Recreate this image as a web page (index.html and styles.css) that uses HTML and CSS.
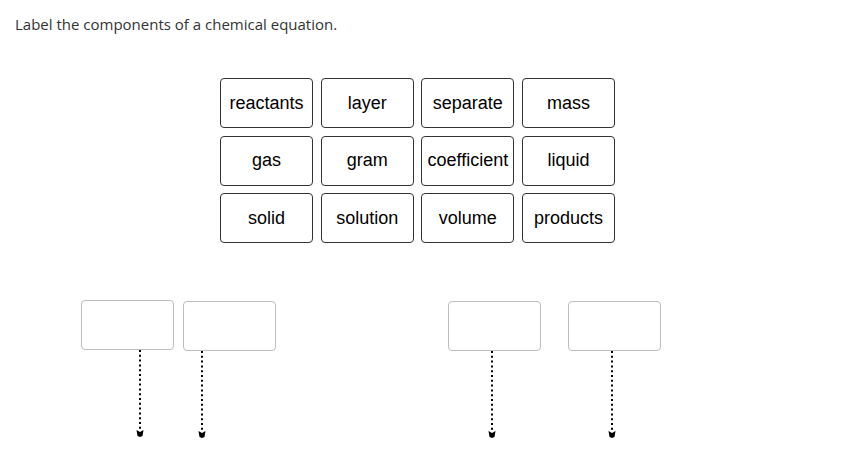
FILE: index.html
```html
<!DOCTYPE html>
<html lang="en">
<head>
<meta charset="utf-8">
<title>Label the components of a chemical equation</title>
<link rel="stylesheet" href="styles.css">
</head>
<body>
<main class="question">
  <p class="prompt">Label the components of a chemical equation.</p>

  <div class="bank">
    <div class="tile">reactants</div>
    <div class="tile">layer</div>
    <div class="tile">separate</div>
    <div class="tile">mass</div>
    <div class="tile">gas</div>
    <div class="tile">gram</div>
    <div class="tile">coefficient</div>
    <div class="tile">liquid</div>
    <div class="tile">solid</div>
    <div class="tile">solution</div>
    <div class="tile">volume</div>
    <div class="tile">products</div>
  </div>

  <div class="diagram">
    <div class="target t1"></div>
    <div class="target t2"></div>
    <div class="target t3"></div>
    <div class="target t4"></div>

    <svg class="leader a1" width="10" height="90" viewBox="0 0 10 90"><line x1="5" y1="0" x2="5" y2="79" stroke="#000" stroke-width="2" stroke-dasharray="2 2.8"/><path d="M1.5 80 L5 82 L8.5 80 L7.5 86 L5 87 L2.5 86 Z" fill="#000"/></svg>
    <svg class="leader a2" width="10" height="90" viewBox="0 0 10 90"><line x1="5" y1="0" x2="5" y2="79" stroke="#000" stroke-width="2" stroke-dasharray="2 2.8"/><path d="M1.5 80 L5 82 L8.5 80 L7.5 86 L5 87 L2.5 86 Z" fill="#000"/></svg>
    <svg class="leader a3" width="10" height="90" viewBox="0 0 10 90"><line x1="5" y1="0" x2="5" y2="79" stroke="#000" stroke-width="2" stroke-dasharray="2 2.8"/><path d="M1.5 80 L5 82 L8.5 80 L7.5 86 L5 87 L2.5 86 Z" fill="#000"/></svg>
    <svg class="leader a4" width="10" height="90" viewBox="0 0 10 90"><line x1="5" y1="0" x2="5" y2="79" stroke="#000" stroke-width="2" stroke-dasharray="2 2.8"/><path d="M1.5 80 L5 82 L8.5 80 L7.5 86 L5 87 L2.5 86 Z" fill="#000"/></svg>
  </div>
</main>
</body>
</html>
```

FILE: styles.css
```css
html, body {
  margin: 0;
  padding: 0;
  background: #fff;
}

.question {
  width: 841px;
  height: 449px;
  overflow: hidden;
}

.prompt {
  margin: 0;
  padding: 14px 0 0 15px;
  font-family: "Open Sans", "Lato", sans-serif;
  font-size: 15px;
  line-height: 20px;
  color: #333;
}

.bank {
  display: grid;
  grid-template-columns: repeat(4, 93px);
  grid-auto-rows: 50px;
  column-gap: 7.67px;
  row-gap: 7.5px;
  margin: 44px 0 0 220px;
  width: max-content;
}

.tile {
  box-sizing: border-box;
  display: flex;
  align-items: center;
  justify-content: center;
  border: 1px solid #333;
  border-radius: 4px;
  background: #fff;
  font-family: "Liberation Sans", Arial, sans-serif;
  font-size: 18px;
  color: #000;
  white-space: nowrap;
}

/* free canvas: drop targets and their leader arrows */
.diagram {
  position: relative;
  height: 207px;
  border-bottom: 1px solid #eee;
}

.target {
  position: absolute;
  box-sizing: border-box;
  width: 93px;
  height: 50px;
  border: 1px solid #bdbdbd;
  border-radius: 4px;
  background: #fff;
}

.t1 { left: 81px; top: 57px; }
.t2 { left: 183px; top: 58px; }
.t3 { left: 448px; top: 58px; }
.t4 { left: 568px; top: 58px; }

.leader {
  position: absolute;
  display: block;
}

.a1 { left: 135px; top: 107px; }
.a2 { left: 197px; top: 108px; }
.a3 { left: 487px; top: 108px; }
.a4 { left: 607px; top: 108px; }
```
